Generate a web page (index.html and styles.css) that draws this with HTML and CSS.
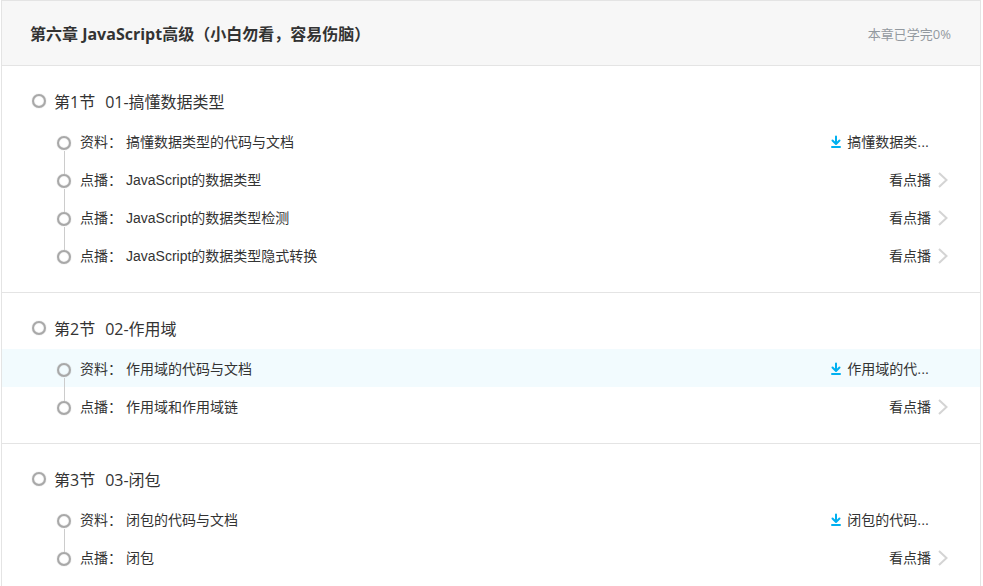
FILE: index.html
```
<!DOCTYPE html>
<html lang="zh-CN">
<head>
    <meta charset="UTF-8">
    <meta name="viewport" content="width=device-width, initial-scale=1.0">
    <title>第六章 JavaScript高级</title>
    <link rel="stylesheet" href="styles.css">
</head>
<body>

    <!-- shared icons -->
    <svg class="sprite" aria-hidden="true">
        <symbol id="download" viewBox="0 0 12 14">
            <path d="M6 1.5V8.5M2.5 5.5L6 9L9.5 5.5" fill="none" stroke="currentColor" stroke-width="2" stroke-linecap="round" stroke-linejoin="round"/>
            <path d="M2 12H10" stroke="currentColor" stroke-width="2" stroke-linecap="round"/>
        </symbol>
        <symbol id="arrow" viewBox="0 0 10 16">
            <path d="M1 1L8.5 8L1 15" fill="none" stroke="currentColor" stroke-width="2"/>
        </symbol>
    </svg>

    <main class="chapter">
        <header class="chapter-header">
            <h1>第六章 JavaScript高级（小白勿看，容易伤脑）</h1>
            <span class="progress">本章已学完0%</span>
        </header>

        <section class="section">
            <h2><i class="dot"></i><span class="number">第1节</span><span>01-搞懂数据类型</span></h2>
            <ul>
                <li class="row">
                    <i class="dot"></i><span class="type">资料：</span><span class="name">搞懂数据类型的代码与文档</span>
                    <a class="download" href="#"><svg><use href="#download"/></svg>搞懂数据类...</a>
                </li>
                <li class="row">
                    <i class="dot"></i><span class="type">点播：</span><span class="name">JavaScript的数据类型</span>
                    <a class="play" href="#">看点播<svg><use href="#arrow"/></svg></a>
                </li>
                <li class="row">
                    <i class="dot"></i><span class="type">点播：</span><span class="name">JavaScript的数据类型检测</span>
                    <a class="play" href="#">看点播<svg><use href="#arrow"/></svg></a>
                </li>
                <li class="row">
                    <i class="dot"></i><span class="type">点播：</span><span class="name">JavaScript的数据类型隐式转换</span>
                    <a class="play" href="#">看点播<svg><use href="#arrow"/></svg></a>
                </li>
            </ul>
        </section>

        <section class="section">
            <h2><i class="dot"></i><span class="number">第2节</span><span>02-作用域</span></h2>
            <ul>
                <li class="row active">
                    <i class="dot"></i><span class="type">资料：</span><span class="name">作用域的代码与文档</span>
                    <a class="download" href="#"><svg><use href="#download"/></svg>作用域的代...</a>
                </li>
                <li class="row">
                    <i class="dot"></i><span class="type">点播：</span><span class="name">作用域和作用域链</span>
                    <a class="play" href="#">看点播<svg><use href="#arrow"/></svg></a>
                </li>
            </ul>
        </section>

        <section class="section">
            <h2><i class="dot"></i><span class="number">第3节</span><span>03-闭包</span></h2>
            <ul>
                <li class="row">
                    <i class="dot"></i><span class="type">资料：</span><span class="name">闭包的代码与文档</span>
                    <a class="download" href="#"><svg><use href="#download"/></svg>闭包的代码...</a>
                </li>
                <li class="row">
                    <i class="dot"></i><span class="type">点播：</span><span class="name">闭包</span>
                    <a class="play" href="#">看点播<svg><use href="#arrow"/></svg></a>
                </li>
            </ul>
        </section>
    </main>

</body>
</html>
```

FILE: styles.css
```
*{
    box-sizing: border-box;
    margin: 0;
    padding: 0;
}

body{
    padding: 0 2px 0 1px;
    background: #ffffff;
    color: #333333;
    font-family: "Liberation Sans", "Noto Sans CJK SC", sans-serif;
    font-size: 14px;
}

ul{
    list-style: none;
}

a{
    color: inherit;
    text-decoration: none;
}

.sprite{
    display: none;
}

.chapter{
    min-height: 100vh;
    border: 1px solid #e4e4e4;
    border-bottom: none;
}

.chapter-header{
    display: flex;
    justify-content: space-between;
    align-items: center;
    height: 65px;
    padding: 2px 29px 0 28px;
    background: #f7f7f7;
    border-bottom: 1px solid #e4e4e4;
    font-family: "Open Sans", "Noto Sans CJK SC", sans-serif;
}

h1{
    font-size: 16px;
    font-weight: bold;
    line-height: 24px;
}

.progress{
    color: #93999f;
    font-size: 13px;
    line-height: 24px;
}

.section{
    padding: 24px 0 18px;
    border-bottom: 1px solid #e4e4e4;
}

.section:last-child{
    padding-bottom: 0;
    border-bottom: none;
}

h2{
    display: flex;
    height: 32px;
    padding: 0 30px;
    font-family: "Open Sans", "Noto Sans CJK SC", sans-serif;
    font-size: 16px;
    font-weight: normal;
    line-height: 24px;
}

h2 .dot{
    margin-top: 4px;
}

.number{
    margin: 0 10px 0 8px;
}

.dot{
    flex: none;
    width: 14px;
    height: 14px;
    border: 2px solid #a8a8a8;
    border-radius: 50%;
    box-shadow: 0 0 1px #a8a8a8, inset 0 0 1px #a8a8a8;
}

.row{
    position: relative;
    display: flex;
    align-items: center;
    height: 38px;
    padding: 2px 32px 0 55px;
    line-height: 20px;
}

.row .dot{
    margin-top: 2px;
}

.row.active, .row:hover{
    background: #f2fbfe;
}

/* line joining a dot to the next one */
.row:not(:last-child)::after{
    content: "";
    position: absolute;
    z-index: 1;
    top: 29px;
    left: 62px;
    width: 1px;
    height: 23px;
    background: #cccccc;
}

.type{
    width: 46px;
    margin-left: 9px;
    white-space: nowrap;
}

.name{
    flex: 1;
}

.download, .play{
    display: flex;
    align-items: center;
}

.download{
    gap: 5px;
    margin-right: 19px;
}

.download svg{
    width: 12px;
    height: 14px;
    color: #00b0f0;
}

.play{
    gap: 7px;
}

.play svg{
    width: 10px;
    height: 16px;
    color: #d4d4d4;
}
```
